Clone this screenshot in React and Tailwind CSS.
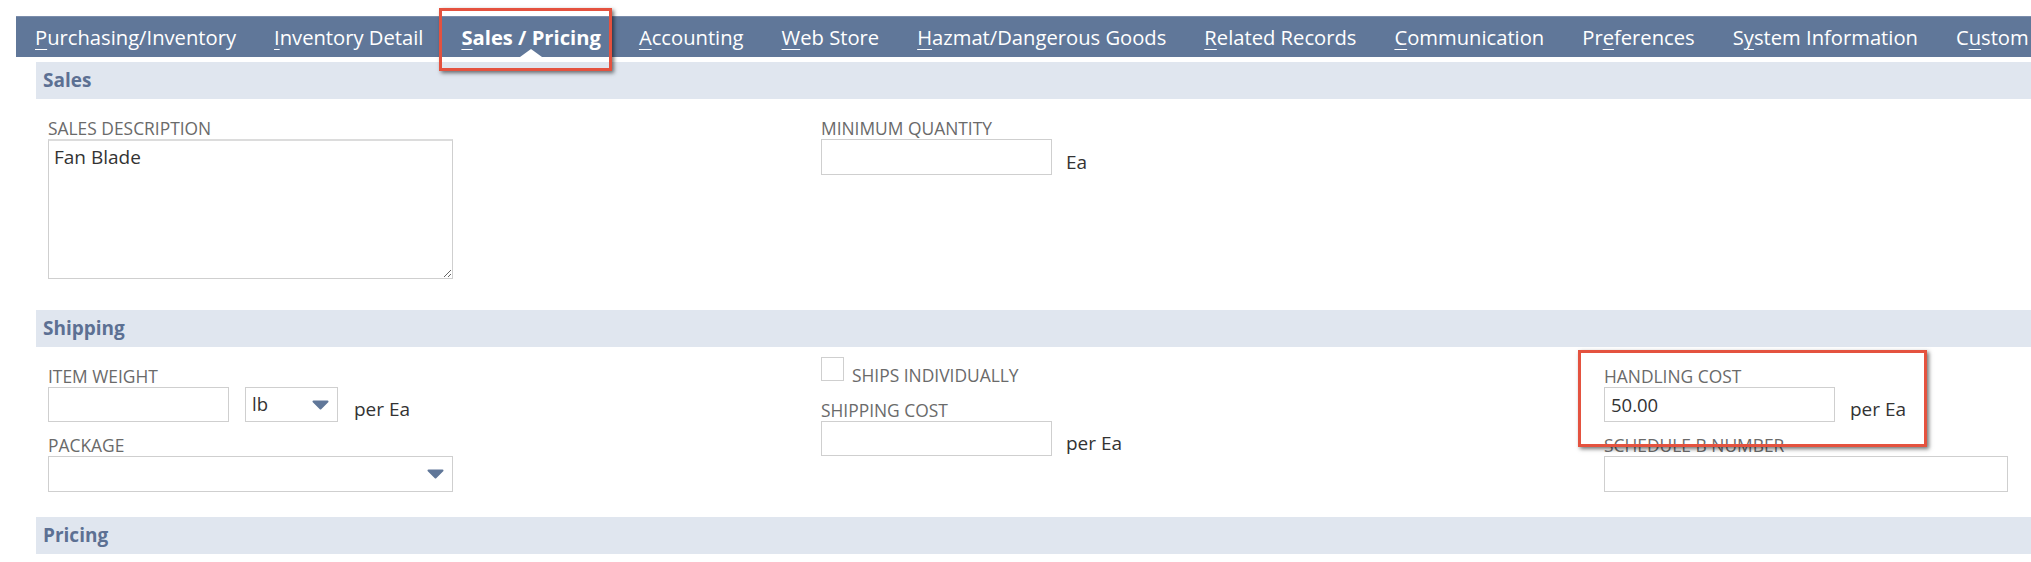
import React from "react";

const tabs = [
  { label: "Purchasing/Inventory", key: 0 },
  { label: "Inventory Detail", key: 0 },
  { label: "Sales / Pricing", key: 0, active: true },
  { label: "Accounting", key: 0 },
  { label: "Web Store", key: 0 },
  { label: "Hazmat/Dangerous Goods", key: 0 },
  { label: "Related Records", key: 0 },
  { label: "Communication", key: 0 },
  { label: "Preferences", key: 2 },
  { label: "System Information", key: 1 },
  { label: "Custom", key: 1 },
];

const Tab = ({ tab }) => {
  const before = tab.label.slice(0, tab.key);
  const letter = tab.label.charAt(tab.key);
  const after = tab.label.slice(tab.key + 1);
  return (
    <div className={`relative flex h-full items-center px-[19px] text-white ${tab.active ? "font-bold" : ""}`}>
      <span>
        {before}
        <span className="underline decoration-1 underline-offset-[4px]">{letter}</span>
        {after}
      </span>
      {tab.active && (
        <>
          {/* little pointer under the active tab */}
          <div className="absolute bottom-0 left-1/2 h-0 w-0 -translate-x-1/2 border-x-[11px] border-b-[8px] border-x-transparent border-b-white"></div>
          {/* red annotation box */}
          <div className="absolute -top-[9px] -bottom-[14px] -left-[3px] right-[8px] border-[3px] border-[#e4523f] shadow-[2px_2px_4px_rgba(0,0,0,0.55)]"></div>
        </>
      )}
    </div>
  );
};

const SectionHeader = ({ title }) => (
  <div className="flex h-[37px] items-center bg-[#e0e6ef] pl-[7px] text-[19px] font-bold text-[#5c7093]">
    {title}
  </div>
);

const Label = ({ children }) => (
  <div className="mb-[1px] h-[20px] text-[17.4px] leading-[20px] text-[#6a6a6a] uppercase">{children}</div>
);

const TextBox = ({ className = "", value = "" }) => (
  <input
    readOnly
    defaultValue={value}
    className={`h-[35px] border border-[#cfcfcf] bg-white px-[6px] text-[18.5px] text-[#333] outline-none ${className}`}
  />
);

const Arrow = () => (
  <svg width="17" height="10" viewBox="0 0 17 10">
    <path d="M1.5 1.5 H15.5 L8.5 8.5 Z" fill="#607799" stroke="#607799" strokeWidth="2" strokeLinejoin="round" />
  </svg>
);

const SelectBox = ({ className = "", value = "" }) => (
  <div className={`flex h-[35px] items-center justify-between border border-[#cfcfcf] bg-white pl-[6px] pr-[8px] text-[18.5px] text-[#333] ${className}`}>
    <span className="-mt-[2px]">{value}</span>
    <Arrow />
  </div>
);

const Unit = ({ children, className = "" }) => (
  <span className={`pb-[1px] text-[19px] leading-[24px] text-[#333] ${className}`}>{children}</span>
);

export default function App() {
  return (
    <div className="h-[562px] w-full overflow-hidden bg-white pt-[16px] font-['Open_Sans','Liberation_Sans',sans-serif]">
      {/* subtab bar */}
      <div className="ml-[16px] flex h-[41px] items-center whitespace-nowrap border-t border-[#7b8dab] bg-[#607799] text-[20.2px]">
        {tabs.map((tab) => (
          <Tab key={tab.label} tab={tab} />
        ))}
      </div>

      <div className="ml-[36px] mt-[5px]">
        <SectionHeader title="Sales" />
        <div className="grid grid-cols-[773px_783px_1fr] pb-[31px] pl-[12px] pt-[19px]">
          <div>
            <Label>Sales Description</Label>
            <textarea
              readOnly
              defaultValue="Fan Blade"
              className="block h-[140px] w-[405px] border border-[#cfcfcf] border-t-2 border-t-[#dcdcdc] px-[5px] py-[4px] text-[19px] leading-[24px] text-[#333] outline-none"
            />
          </div>
          <div>
            <Label>Minimum Quantity</Label>
            <div className="flex items-end">
              <TextBox className="h-[36px] w-[231px]" />
              <Unit className="ml-[14px]">Ea</Unit>
            </div>
          </div>
          <div></div>
        </div>

        <SectionHeader title="Shipping" />
        <div className="grid grid-cols-[773px_783px_1fr] pb-[25px] pl-[12px] pt-[10px]">
          <div className="pt-[9px]">
            <Label>Item Weight</Label>
            <div className="flex items-end">
              <TextBox className="w-[181px]" />
              <SelectBox className="ml-[16px] w-[93px]" value="lb" />
              <Unit className="ml-[16px]">per Ea</Unit>
            </div>
            <div className="mt-[13px]">
              <Label>Package</Label>
              <SelectBox className="h-[36px] w-[405px]" />
            </div>
          </div>

          <div>
            <div className="flex items-start">
              <div className="h-[24px] w-[23px] border border-[#cfcfcf] bg-white"></div>
              <span className="ml-[8px] mt-[8px] text-[17.4px] leading-[20px] text-[#6a6a6a]">SHIPS INDIVIDUALLY</span>
            </div>
            <div className="mt-[15px]">
              <Label>Shipping Cost</Label>
              <div className="flex items-end">
                <TextBox className="w-[231px]" />
                <Unit className="ml-[14px]">per Ea</Unit>
              </div>
            </div>
          </div>

          <div className="relative pt-[9px]">
            <Label>Handling Cost</Label>
            <div className="flex items-end">
              <TextBox className="w-[231px]" value="50.00" />
              <Unit className="ml-[15px]">per Ea</Unit>
            </div>
            <div className="mt-[13px]">
              <Label>Schedule B Number</Label>
              <TextBox className="h-[36px] w-[404px]" />
            </div>
            {/* red annotation box */}
            <div className="absolute -left-[26px] -top-[7px] h-[97px] w-[349px] border-[3px] border-[#e4523f] shadow-[2px_2px_4px_rgba(0,0,0,0.55)]"></div>
          </div>
        </div>

        <SectionHeader title="Pricing" />
      </div>
    </div>
  );
}
